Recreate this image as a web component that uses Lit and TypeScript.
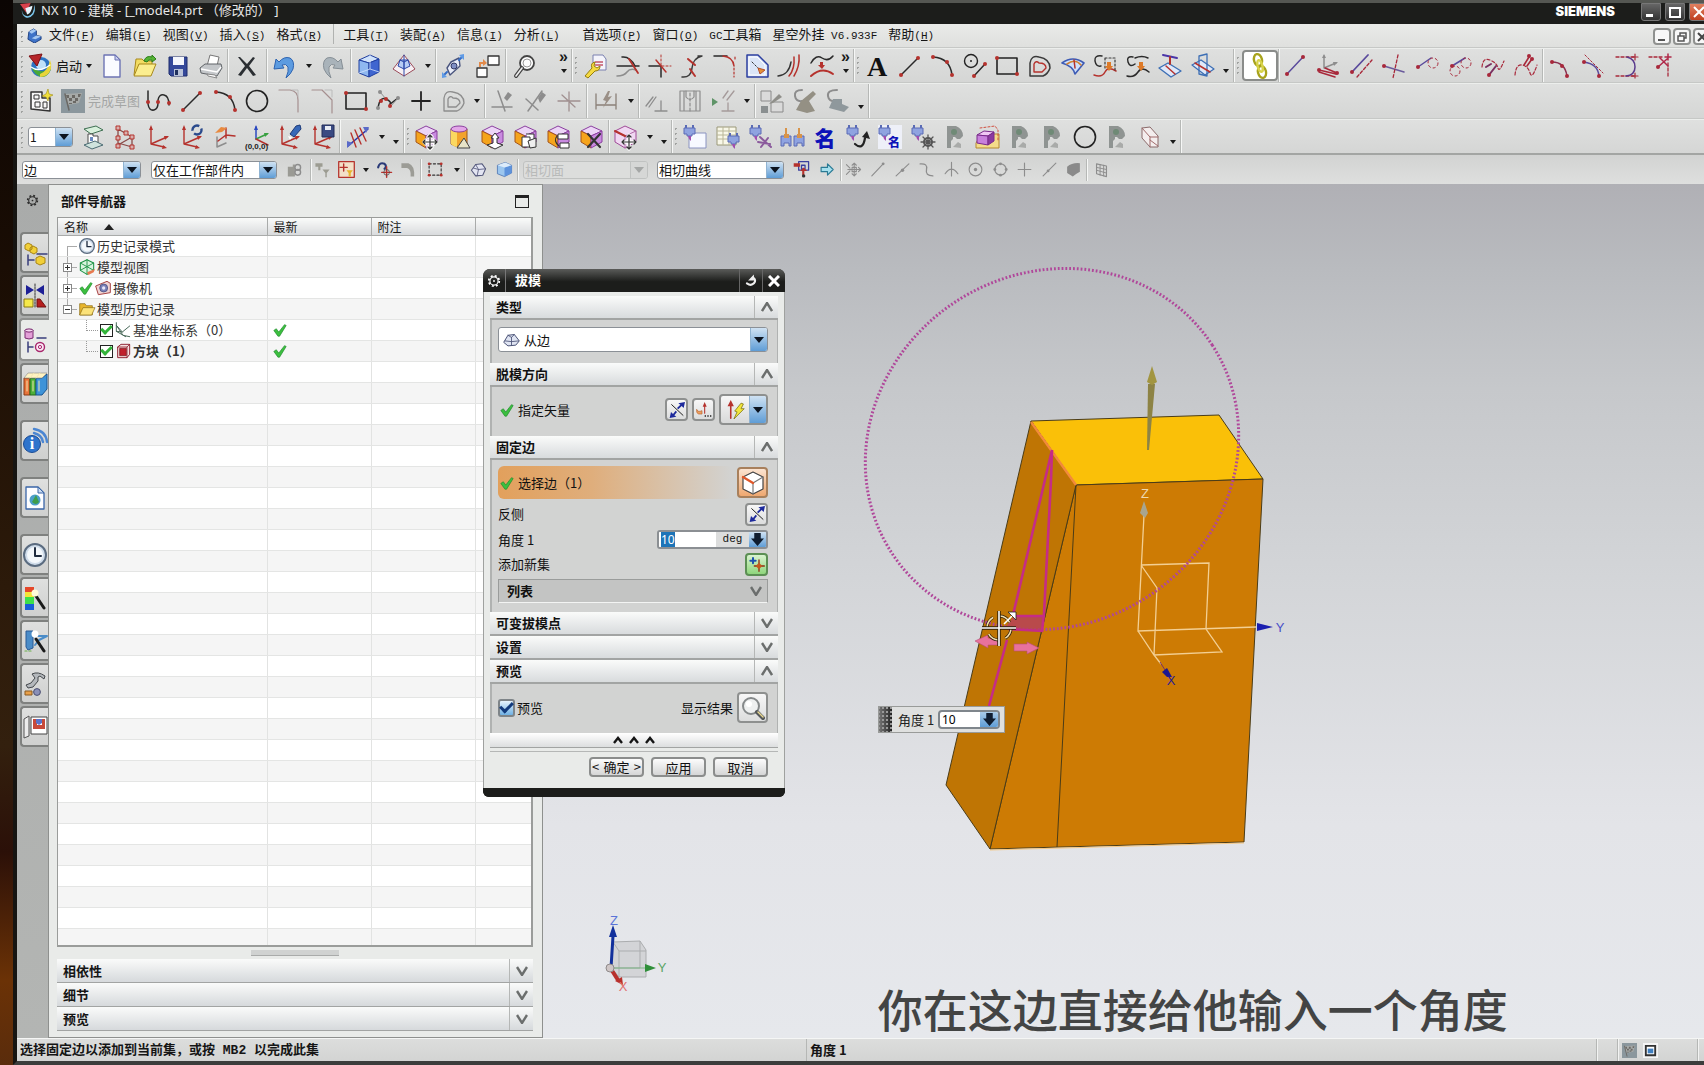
import { LitElement, html, svg, css, nothing } from "lit";

/* ---------- drawing helpers ---------- */
const L = (d: string, c = "#2a2a2a", w = 1.5, dash = "") =>
  svg`<path d=${d} fill="none" stroke=${c} stroke-width=${w} stroke-dasharray=${dash || "none"} stroke-linecap="round" stroke-linejoin="round"/>`;
const P = (d: string, f: string, s = "none", w = 1) =>
  svg`<path d=${d} fill=${f} stroke=${s} stroke-width=${w} stroke-linejoin="round"/>`;
const C = (x: number, y: number, r: number, f = "none", s = "none", w = 1) =>
  svg`<circle cx=${x} cy=${y} r=${r} fill=${f} stroke=${s} stroke-width=${w}/>`;
const RED = "#b5322d";
const G = "#8d8d8d";
const dots = (pts: number[][], c = RED) => pts.map(([x, y]) => C(x, y, 2, c));
const TICK = "M1 9 4 7 7 11 14 2 16 3 8 16 6 16Z";

const purpleCube = (extra: unknown) => svg`
  ${P("M11 1 22 6 11 11 1 6Z", "#ecd5f6", "#8b3fa0")}
  ${P("M1 6 11 11V23L1 17Z", "#f5a41c", "#a4541c")}
  ${P("M11 11 22 6V17L11 23Z", "#c98be0", "#8b3fa0")}${extra}`;
const plug = (x: number, y: number) => svg`<g transform="translate(${x} ${y})">
  ${P("M1 3H12V9H9V11H4V9H1Z", "#8fa3e0", "#5a6bb5")}${P("M3 0V3M10 0V3", "none", "#5a6bb5", 2)}
  ${P("M5 11H8V16L6 14Z", "#a04fb0")}</g>`;
const leaf = svg`${P("M4 1H13Q20 4 20 11L17 14H14L12 12H10V14L8 16V23H4Z", "#8f9492")}${C(11, 7, 3, "#6f8a76")}${P("M10 22 15 17 18 19V23Z", "#a9aba9")}`;
const axes = (c = RED) => svg`${L("M4 19V3M4 19 20 12M4 19 17 22", c, 1.4)}${P("M4 0 6 5H2ZM22 11 18 15 17 11ZM20 23 15 24 16 20Z", c)}`;

const ICONS: Record<string, unknown> = {
  logo: svg`${C(13, 13, 10, "#2c74c4")}${P("M3 12Q7 23 15 23 23 21 23 12 19 18 12 17 6 16 3 12Z", "#4aa83a")}${P("M12 20Q20 17 22 6 24 10 23 15 20 23 12 23Z", "#e8d43a")}${C(13, 11, 5, "#bfe1fa")}${P("M1 2 14 0 9 12Z", "#b5262a", "#7c1014")}${L("M3 13Q11 19 22 11", "#fff", 1.2)}`,
  newdoc: svg`${P("M4 1H15L20 6V23H4Z", "#fafbff", "#6d74b4", 1.4)}${P("M15 1V6H20Z", "#c9cef0", "#6d74b4")}`,
  open: svg`${P("M1 21 3 5H9L11 7H19V10", "#f2dc62", "#a8881c")}${P("M1 22 6 10H23L18 22Z", "#fbee8f", "#a8881c")}${P("M11 7Q13 1 19 3V1L23 5 19 8V6Q15 5 14 8Z", "#55b335", "#2d7f1c")}`,
  save: svg`${P("M3 3H21V22H5L3 20Z", "#34489a", "#1e2c6c")}${P("M7 3H18V11H7Z", "#f4f6fc")}${P("M8 15H17V22H8Z", "#b9c2d8")}${P("M9 16H12V21H9Z", "#20305e")}`,
  print: svg`${P("M8 12 11 1 20 3 18 12Z", "#fff", "#777")}${P("M1 14 6 10H22L23 14 18 22 2 19Z", "#c4c7ca", "#606468")}${P("M2 15 18 18 22 13", "none", "#fff", 1.3)}${P("M8 20 16 21 18 24 9 22Z", "#fff", "#888")}`,
  del: svg`${P("M3 3 5 3 12 10 18 3 20 4 14 12 21 21 18 22 12 14 6 22 3 21 10 12Z", "#2b2f33")}`,
  undo: svg`${P("M2 15 4 5 7 8Q12 2 18 4 23 7 21 15 19 20 14 24 17 17 16 13 14 9 10 11L12 14Z", "#5c9be0", "#2d63b0")}`,
  redo: svg`${P("M22 15 20 5 17 8Q12 2 6 4 1 7 3 15 5 20 10 24 7 17 8 13 10 9 14 11L12 14Z", "#a9b3ba", "#868f96")}`,
  cube: svg`${P("M2 6 13 1 22 5 12 9Z", "#cfe2fb", "#1f3ea0")}${P("M2 6 12 9V23L2 19Z", "#8fb8f0", "#1f3ea0")}${P("M12 9 22 5V18L12 23Z", "#3f66d0", "#1f3ea0")}${L("M13 1V15L2 19M13 15 22 18", "#d5e4fc", 0.8)}`,
  pyramid: svg`${P("M12 1 1 15 12 22 23 15Z", "#f6f0f4", "#9a4a58")}${P("M8 6 16 6 18 12 12 15 6 12Z", "#b7cdf4", "#2c48a8")}${L("M12 1V22M8 6 12 8 16 6M12 8V15", "#2c48a8", 1)}`,
  fit: svg`${P("M10 8 18 4 19 12 9 21 6 14Z", "#e9edf8", "#4a557e", 1.4)}${C(13, 12, 3, "#7f8fc4", "#333a66")}${L("M18 6 22 2M2 22 6 18", "#356ec8", 2)}${P("M23 0V6L18 1ZM1 24V18L6 23Z", "#5f9be6")}`,
  windows: svg`${P("M12 2H23V11H12ZM1 14H11V23H1Z", "#fdfdfd", "#333", 1.3)}${P("M3 13V8H7V5L11 9 7 12V10H5V13Z", "#e28a4a")}`,
  mag: svg`${C(14, 9, 7, "#fff", "#444", 1.8)}${C(14, 9, 4, "none", "#999", 1)}${L("M9 14 3 22", "#444", 4)}${L("M9 14 3 22", "#eee", 1.6)}`,
  wrench: svg`${P("M10 1H20L23 5V16H10Z", "#f4f4fb", "#7a80b0")}${P("M12 8H20M12 11H20", "none", "#c4566a", 1.4)}${P("M2 22 9 14Q7 9 12 8L11 12 14 14 17 12Q17 17 12 17L5 24Z", "#f5da40", "#957d10")}`,
  cv1: svg`${L("M1 22Q8 22 11 18T20 16", G)}${L("M1 12H23")}${L("M6 3Q14 2 19 12")}${L("M13 5 22 19", RED, 1.8)}`,
  cv2: svg`${L("M1 12H13M13 12V23")}${L("M13 1V12H23", RED, 1, "2 2")}${L("M8 6 18 18", RED)}`,
  cv3: svg`${L("M2 23Q11 24 12 14T22 2H18", "#3a3a3a")}${L("M8 5 15 11M10 15 15 22", RED, 2)}`,
  cv4: svg`${L("M1 2H14")}${L("M10 2Q20 3 21 12", RED)}${L("M21 14V23M22 5V1", RED, 1.2, "2 2")}`,
  cv5: svg`${P("M2 1H13L23 11V23H2Z", "#dbe5f7", "#2c3fa0", 1.5)}${P("M4 3H12L20 11V21H4Z", "none", "#fff")}${L("M7 8 14 15", "#333", 1, "2 2")}${P("M13 14 20 16 15 20Z", "#e49238", "#b5502d")}`,
  cv6: svg`${L("M1 22Q12 21 14 8", "#333")}${L("M12 22Q18 15 17 3M17 22Q23 12 22 1", RED, 1.5)}`,
  cv7: svg`${L("M1 9Q6 0 12 4T23 2")}${L("M1 22Q12 12 23 20", RED, 2)}${P("M10 8H13V11H15L12 15 8 11H10Z", RED)}`,
  text: svg`<text x="12" y="22" text-anchor="middle" font-family="Liberation Serif, serif" font-weight="bold" font-size="28" fill="#111">A</text>`,
  line: svg`${L("M3 21 20 4")}${dots([[3, 21], [20, 4]])}`,
  arc: svg`${L("M3 3Q20 4 22 21")}${dots([[3, 3], [17, 8], [22, 21]])}`,
  circ: svg`${C(12, 12, 10.5, "none", "#222", 1.6)}`,
  circline: svg`${C(8, 7, 6.5, "none", "#222", 1.4)}${C(8, 7, 1, "#222")}${L("M11 22 22 10")}${dots([[11, 22], [22, 10]])}`,
  rect: svg`${P("M2 4H22V20H2Z", "none", "#222", 1.6)}${dots([[2, 4], [22, 20]])}`,
  offset: svg`${P("M2 22V9Q3 1 11 3 22 5 22 14 20 20 15 22Z", "none", "#3a3a3a", 1.5)}${P("M6 18V10Q8 6 11 9 18 9 18 14L14 18Z", "none", RED, 1.4)}`,
  offsetg: svg`${P("M2 22V9Q3 1 11 3 22 5 22 14 20 20 15 22Z", "none", G, 1.3)}${P("M6 18V10Q8 6 11 9 18 9 18 14L14 18Z", "none", G, 1.3)}`,
  surf1: svg`${P("M1 9Q12 1 23 9L14 20Q12 12 1 9Z", "#cfe0fa", "#3d5bb5", 1.6)}${L("M6 10Q14 4 20 11", "#d08030", 1.6)}${L("M13 6 14 14", RED)}`,
  wrap1: svg`${L("M9 2Q1 1 2 7T8 12")}${L("M1 21Q9 24 12 18T23 17", RED)}${L("M12 4H22V18M12 4V16", "#3a3a3a", 1.2, "2 2")}${P("M14 8H18V12H20L16 17 12 12H14Z", "#dd7a28")}`,
  wrap2: svg`${L("M7 3Q0 2 2 8T9 10M9 4Q16 1 22 4")}${L("M1 22Q8 24 12 18T23 18")}${P("M13 8H17V12H19L15 17 11 12H13Z", "#dd7a28")}`,
  surf2: svg`${P("M1 14 10 9 23 17 13 23Z", "#dfe8f8", "#3d6fb5", 1.4)}${L("M5 1 19 4", "#4a35a8", 2)}${L("M12 3V10", RED, 2)}${L("M8 12 17 20", RED)}`,
  surf3: svg`${P("M1 11 10 6 23 15 14 21Z", "#dfe8f8", "#3d6fb5", 1.3)}${P("M8 2 16 0V22L8 20Z", "none", "#3d6fb5", 1.3)}${L("M4 9 19 18", RED)}`,
  chain: svg`<g fill="none" stroke-width="2.4"><ellipse cx="10" cy="6" rx="4" ry="6" transform="rotate(-14 10 6)" stroke="#a8a31c"/><ellipse cx="14" cy="18" rx="4" ry="6" transform="rotate(-14 14 18)" stroke="#a8a31c"/><ellipse cx="12" cy="12" rx="2.4" ry="6" transform="rotate(-14 12 12)" stroke="#d8d348"/></g>`,
  k1: svg`${L("M4 20 20 3", "#5a4a9c")}${dots([[4, 20], [20, 3]], "#a8283a")}`,
  k2: svg`${L("M8 14V2M8 14 20 9", G)}${P("M8 0 10 4H6ZM22 8 18 12 17 8Z", G)}${L("M3 16 20 20M9 14 21 19M3 18 19 23", "#a8283a")}${dots([[3, 16], [21, 19]], "#a8283a")}`,
  k3: svg`${L("M3 18 19 1", "#5a4a9c", 1.8)}${L("M8 23 23 6", "#a8283a", 1.3, "3 2")}${dots([[3, 18]], "#a8283a")}`,
  k4: svg`${L("M2 12 22 18", "#6a5a9c")}${L("M16 1 11 24", "#a8283a", 1.3, "3 2")}${dots([[2, 12]], "#a8283a")}`,
  k5: svg`${L("M3 13 16 4", "#5a4a9c")}<circle cx="18" cy="9" r="5" fill="none" stroke="#a8283a" stroke-dasharray="3 2"/>${dots([[3, 13]], "#a8283a")}`,
  k6: svg`${L("M4 12 17 4", "#5a4a9c")}<g fill="none" stroke="#a8283a" stroke-dasharray="3 2"><circle cx="18" cy="9" r="5"/><circle cx="7" cy="17" r="5"/></g>${dots([[4, 12]], "#a8283a")}`,
  k7: svg`${L("M1 13Q2 3 9 6T17 14 23 7", "#a8283a", 1.2, "3 2")}${L("M8 21 15 12M5 13 10 10", "#7a3060", 2)}${dots([[8, 21]], "#a8283a")}`,
  k8: svg`${L("M1 21Q2 10 8 11T16 19 23 11", "#a8283a", 1.2, "3 2")}${L("M10 11 15 3M13 12 18 5", "#a8283a", 1.6)}${dots([[18, 5], [15, 2]], "#a8283a")}`,
  k9: svg`${L("M4 8Q17 8 19 22", "#8a3050")}${dots([[4, 8], [14, 12], [19, 22]], "#a8283a")}`,
  k10: svg`${L("M3 8Q17 10 18 22", "#5a4a9c")}${L("M4 1 22 19", "#a8283a", 1, "2 2")}${dots([[3, 8], [18, 22]], "#a8283a")}`,
  k11: svg`${L("M1 3H20M1 22H20", "#a8283a", 1.3, "3 2")}${L("M12 3Q20 5 20 13T11 22", "#5a3a8c")}${L("M20 0V6M17 3H23M20 19V24M17 22H23", "#a8283a", 1.2)}`,
  k12: svg`${L("M1 3H16M20 9V24", "#a8283a", 1.3, "3 2")}${L("M12 4 20 12M10 13 19 5M20 0V6M17 3H23", "#b02848")}${dots([[10, 13]], "#a8283a")}`,
  sketch: svg`${P("M2 3H13V9H21V22L2 20Z", "#f7f7f7", "#333", 1.5)}${P("M5 6H10V10H5ZM6 13H11V18H6ZM14 13H18V19H14Z", "none", "#333")}${P("M19 0 20 5 24 6 20 8 19 12 17 8 13 7 17 5Z", "#f0de3a", "#a08d10", 0.6)}`,
  flag: svg`${P("M0 0H24V24H0Z", "#8b979d")}${P("M4 5 21 4 18 14 7 16Z", "#a7aaa8")}${P("M5 6H8V9H6ZM11 6H14V9H11ZM17 5H20L19 8H17ZM8 9H11V12H8ZM14 9H17V12H14ZM8 14H11V15H8ZM12 12H15V14H12Z", "#6b6965")}${L("M4 5 8 21", "#6b6965")}`,
  scurve: svg`${L("M1 2V15Q2 22 7 21 11 20 11 14V11Q12 5 17 6 22 7 22 16")}${dots([[1, 13], [11, 13], [22, 14]])}`,
  fillet: svg`${L("M1 1H12Q20 2 20 11V23", "#a58f8f", 1.2)}${L("M14 1H20V8", "#bbb", 1)}`,
  chamfer: svg`${L("M1 1H11L21 11V24", "#a58f8f", 1.2)}${L("M14 1H21V8", "#bbb", 1)}`,
  spline: svg`${L("M2 19Q4 7 10 10T14 15 22 9")}${L("M4 3 10 10M14 18 22 9", G, 1)}${dots([[5, 12], [10, 10], [14, 17]])}${dots([[4, 3], [22, 9], [2, 19]], G)}`,
  plus: svg`${L("M12 3V21M3 12H21", "#222", 1.8)}`,
  trim1: svg`${L("M2 18 22 18M8 2 15 22", G)}${P("M14 9 18 3 22 6 17 12Z", G)}`,
  trim2: svg`${L("M2 10 14 21M4 22 18 2", G)}${P("M14 9 18 3 22 6 16 14Z", G)}`,
  trim3: svg`${L("M1 12H23M12 3V22M5 6 18 18", "#a09090", 1.3)}`,
  dim: svg`${L("M2 5V20M22 5V20M3 16H21", "#8a8078", 1.3)}${P("M9 11 14 2 16 2 14 8 18 7 9 19 12 12Z", "#9a8f86")}`,
  perp: svg`${L("M2 17 9 8M5 18 12 8M11 22H23M17 12V22", G, 1.3)}`,
  clamp: svg`${P("M2 2H6V22H2ZM6 2H18V22H6ZM18 2H22V22H18Z", "none", G, 1.2)}${L("M8 2V8Q12 13 16 8V2", G, 1.2)}${L("M12 4V24", G, 1.2, "3 2")}`,
  tri: svg`${P("M1 9 7 13 1 17Z", "#5f9468")}${L("M12 9 17 2M16 11 23 2M11 22H23M17 14V22", "#a59a9a", 1.3)}`,
  dis1: svg`${P("M1 2H11V12H1Z", "#dadada", "#8a8a8a")}${P("M11 13H23V23H11Z", "#dadada", "#8a8a8a")}${P("M1 17H8V24H1Z", "#8a8f90")}${P("M9 15 19 5 22 8 13 14Z", "#8f8f8a")}`,
  dis2: svg`${L("M9 1Q1 1 2 7T9 12", G, 2)}${P("M8 12 20 2 23 5 16 12 22 22 14 24 3 21Z", "#949084")}`,
  dis3: svg`${L("M11 1Q1 1 2 7T9 12", G, 2)}${P("M7 10H16V15L23 18 18 23 3 19Z", "#8f989c")}`,
  layers: svg`${P("M3 4 15 1 22 5 10 9Z", "#d8f0dc", "#3f6f52")}${P("M7 9H12V11H17V19H7Z", "#fff", "#4a4a4a")}${P("M9 12H12V16H9Z", "#6a8ac0")}${P("M3 20 14 16 22 20 11 24Z", "#cfe3dd", "#4a6a72")}`,
  nodes: svg`${L("M4 4V20M4 4 18 12V22L4 18M4 20 18 12", "#8a4a48", 1.3)}${[[4, 3], [4, 13], [4, 21], [12, 8], [18, 12], [18, 22]].map(([x, y]) => P(`M${x - 2} ${y - 2}h4v4h-4Z`, "#d8b0ae", RED))}`,
  ax1: axes(),
  ax2: svg`${axes()}<circle cx="17" cy="5" r="4.5" fill="none" stroke="#2a4a8c" stroke-width="2.4" stroke-dasharray="10 3"/>`,
  ax3: svg`${L("M5 22V12M5 22 14 18", G)}${L("M14 3V13M14 10 23 11M14 10 6 16", RED)}${P("M3 8 9 2 15 3 10 7Z", "#e88a40")}`,
  ax4: svg`${L("M11 14V2", "#2b49c0")}${P("M11 0 13 5H9Z", "#2b49c0")}${L("M11 14 22 9", "#37a040")}${P("M24 8 20 12 19 8Z", "#37a040")}${L("M11 14 23 20", RED)}<text x="0" y="24" font-family="Liberation Sans, sans-serif" font-size="8" font-weight="bold" fill="#222">(0,0,0)</text>`,
  ax5: svg`${axes()}${P("M12 9 18 1 22 0 23 4 16 12Z", "#3768b8", "#1d3a78")}${P("M10 11 14 12 12 15Z", "#fff")}`,
  ax6: svg`${axes()}${P("M11 0H23V12H11Z", "#3a4a82", "#222d58")}${P("M14 1H20V5H14Z", "#e8ecf4")}`,
  dimblue: svg`${L("M2 21 22 4", "#2430a8", 1.5)}${L("M5 8 10 22M9 5 15 19M14 3 20 16", RED, 1.4)}${P("M1 16 7 18 1 23ZM17 2 23 2 20 8Z", "#5a6ac8")}`,
  pc1: purpleCube(svg`${L("M15 10V24M9 17H21M13 12 15 10 17 12M13 22 15 24 17 22M11 15 9 17 11 19M19 15 21 17 19 19", "#fff", 3.4)}${L("M15 10V24M8 17H22M13 12 15 10 17 12M13 22 15 24 17 22M10 15 8 17 10 19M20 15 22 17 20 19", "#333", 1.2)}`),
  pc2: svg`${P("M3 4V19Q11 24 19 19V4Z", "#f2a32c", "#9a541c")}${P("M3 4V19Q6 22 9 22V5Z", "#fbd860")}<ellipse cx="11" cy="4" rx="8" ry="3" fill="#e3a6e8" stroke="#8b3fa0"/>${P("M9 23 16 13 22 23Z", "#e8e4c8", "#444")}`,
  pc3: purpleCube(svg`${P("M14 8 18 13H16V18L22 20 14 24 6 20 12 18V13H10Z", "#fff", "#333")}`),
  pc4: purpleCube(svg`${P("M8 12H16V22H8ZM12 9H20V18H16", "#fff", "#333")}${P("M14 16 22 13V22L16 23Z", "#eee", "#333")}`),
  pc5: purpleCube(svg`${P("M11 9H21V14H11ZM13 18H22V23H13Z", "#fff", "#333")}${L("M10 11Q6 16 12 21", "#333", 1.2)}`),
  pc6: purpleCube(svg`${L("M8 9 20 22M20 9 8 22", "#333", 2.2)}`),
  pc7: svg`${P("M11 1 22 6V17L11 23 1 17V6Z", "#f0d8f2", "#a04a98")}${L("M1 6 11 11 22 6M11 11V23", "#b06aa8", 1)}${L("M1 6 11 11", RED, 2)}${L("M15 10V24M9 17H21", "#fff", 3.4)}${L("M15 10V24M8 17H22M13 12 15 10 17 12M13 22 15 24 17 22M10 15 8 17 10 19M20 15 22 17 20 19", "#333", 1.2)}`,
  pl1: svg`${P("M6 8H23V23H6Z", "#f7f9ff", "#8a93c0")}${plug(0, 0)}`,
  pl2: svg`${P("M1 2H20V20H1Z", "#f8f7e8", "#9a9878")}${P("M1 6H20M1 10H20M1 14H20M7 2V20M13 2V20", "none", "#b9b698")}${plug(11, 8)}`,
  pl3: svg`${plug(1, 0)}${L("M10 17 22 19M13 22 20 13M12 12 23 22", "#8a5a9c", 2)}`,
  pl4: svg`${P("M0 11H10V21H8V18H3V21H0ZM13 11H23V21H21V18H16V21H13Z", "#8fa3e0", "#5a6bb5")}${P("M4 3H6V9H8V13H3V9H4ZM17 3H19V9H21V13H16V9H17Z", "#d8944a")}`,
  ming: svg`<text x="12" y="21" text-anchor="middle" font-family="Noto Sans CJK SC, sans-serif" font-weight="900" font-size="21" fill="#0d12b8">名</text>`,
  pl5: svg`${plug(0, 0)}${L("M9 19Q17 26 19 13", "#222", 2.2)}${P("M21 6 24 14 16 12Z", "#222")}`,
  pl6: svg`${P("M0 0H24V24H0Z", "#eef0f8")}${plug(0, 0)}<text x="16" y="22" text-anchor="middle" font-family="Noto Sans CJK SC, sans-serif" font-weight="900" font-size="12" fill="#0d12b8">名</text>`,
  pl7: svg`${plug(0, 0)}${C(17, 17, 4, "none", "#555", 2)}${L("M17 10V24M10 17H24M12 12 22 22M22 12 12 22", "#555", 1.3)}`,
  leaf,
  gold: svg`${P("M1 18 6 9H24V23H1Z", "#f4dc8a", "#b58a30")}${P("M2 10 9 6 19 7 13 11Z", "#f0c8f4", "#7a2a8c")}${P("M2 10 13 11V20L2 18Z", "#c880dc", "#7a2a8c")}${P("M13 11 19 7V16L13 20Z", "#8a3aa0", "#7a2a8c")}${L("M5 3 20 1 23 5V16", "#d05040", 1, "2 2")}`,
  box3: svg`${P("M4 3 12 2 20 11 20 22H12L4 13Z", "#f4eeee", "#8a6a6a")}${L("M4 3 12 12H20M12 12V22M12 15 20 21", "#a06a6a", 1)}`,
  s1: svg`${P("M4 8H11V5H14V22H4Z", "#9a9a94")}${C(18, 9, 4, "none", G, 2)}${C(18, 16, 4, "none", G, 2)}`,
  s2: svg`${P("M2 3H12V8H9V13H6V8H2ZM12 12H22L18 17V23H16V17Z", "#9c9c92")}`,
  s3: svg`${P("M1 1H23V23H1Z", "#f3e0c8", RED, 1.8)}${L("M8 4V14M3 9H13", RED, 2)}${P("M12 13H21L18 17V22H15V17Z", "#e8b52c")}`,
  s4: svg`${L("M3 9Q5 1 12 4 16 7 12 11", "#2a3a78", 3)}${L("M15 8V23M8 16H22", RED, 2)}${C(15, 16, 4, "none", "#444")}`,
  s5: svg`${P("M2 3H12Q21 6 20 22H15Q16 12 10 10H2Z", "#9c9c96")}`,
  s6: svg`${L("M3 4H20V20H3Z", "#333", 1.6, "3 3")}${dots([[3, 4], [20, 20], [20, 4], [3, 20]])}`,
  s7: svg`${P("M2 13 8 5 17 4 22 11 18 20 8 21Z", "#e3e5f2", "#55597c", 1.5)}${L("M8 5 12 12 22 11M12 12 10 21M5 10 12 12", "#55597c", 1.2)}`,
  s8: svg`${P("M2 6 13 2 22 6V17L12 22 2 18Z", "#9cc6ee", "#3a64a8")}${P("M12 9 22 6V17L12 22Z", "#5d92dc")}${P("M2 6 13 2 22 6 12 9Z", "#dcebfa")}`,
  s9: svg`${P("M8 1H22V13H8ZM12 6H17V11H12Z", "none", "#3a3fa0", 1.8)}${P("M1 3H10V8H1ZM10 14H20L15 9ZM13 14H16V20H13Z", RED)}${C(15, 21, 2.4, "#333")}`,
  s10: svg`${P("M3 9H12V4L20 12 12 20V15H3Z", "#a5e0ee", "#2a7a94", 1.6)}`,
  m1: svg`${L("M13 3V21M4 12H22M13 3 10 6M13 3 16 6M13 21 10 18M13 21 16 18M22 12 19 9M22 12 19 15M2 5 7 10M2 19 7 14", G)}${P("M10 9H16V15H10Z", "none", G, 1.5)}`,
  m2: svg`${L("M4 21 20 4", G, 1.6)}${C(20, 4, 2, G)}`,
  m3: svg`${L("M3 21 21 4", G, 1.6)}${C(12, 13, 2.4, G)}`,
  m4: svg`${L("M3 4Q14 3 12 12T21 21", G, 1.8)}`,
  m5: svg`${L("M3 18Q12 5 21 18M12 2V21", G, 1.6)}`,
  m6: svg`${C(12, 12, 9, "none", G, 1.6)}${C(12, 12, 2.4, G)}`,
  m7: svg`${C(12, 12, 8, "none", G, 1.6)}${dots([[12, 4], [12, 20], [4, 12], [20, 12]], G)}`,
  m8: svg`${L("M12 3V21M3 12H21", G, 1.6)}`,
  m9: svg`${L("M3 21 21 3", G, 1.6)}${C(10, 14, 2, G)}`,
  m10: svg`${P("M3 8Q10 2 21 3V15Q15 18 11 22L3 17Z", "#8a8a8a")}`,
  m11: svg`${P("M5 4 19 7V22L5 18Z", "none", G, 1.6)}${L("M5 9 19 12M5 13 19 17M10 5V20M15 6V21", G, 1.3)}`,
  gear: svg`<circle cx="12" cy="12" r="7" fill="none" stroke="currentColor" stroke-width="2"/><circle cx="12" cy="12" r="9" fill="none" stroke="currentColor" stroke-width="3" stroke-dasharray="3.4 3.7"/>${C(12, 12, 1.6, "currentColor")}`,
  t1: svg`${P("M2 4 5 2 9 4V8L6 10 2 8ZM7 7 10 5 14 7V11L11 13 7 11ZM13 17 17 15 22 17V22L17 24 13 22Z", "#f1cf38", "#a88514")}${L("M5 14V24M5 19H11M14 13H24", "#3a3f7c")}`,
  t2: svg`${P("M3 1 11 6 3 11ZM21 1 13 6 21 11Z", "#1d1f96")}${L("M12 0V24", "#333", 1, "2 1")}${P("M1 15H10V23H1Z", "#f6e94a", "#8a7a10")}${P("M14 15H17L23 23H14Z", "#b51e1e", "#701010")}`,
  t3: svg`${P("M2 2V10Q6 12 10 10V2Z", "#e3a0d8", "#7a2a70")}<ellipse cx="6" cy="2.5" rx="4" ry="1.6" fill="#f7d8f2" stroke="#7a2a70"/>${L("M14 10H23M5 14V24M5 19H10", "#3a3f7c")}${C(17, 19, 4.5, "#fbe8f6", "#a8286c", 1.4)}${C(17, 19, 1.6, "none", "#a8286c")}`,
  t4: svg`${P("M1 6H7V23H1Z", "#e8743a", "#8a3a14")}${P("M7 6H13V23H7Z", "#4caf38", "#246a18")}${P("M13 6H19L24 2V17L19 23H13Z", "#3d93d8", "#1a5590")}${P("M1 6 5 1H24L19 6Z", "#fff3c0", "#888", 0.6)}${L("M7 6 11 1M13 6 17 1M4 9V19M10 9V19M16 9V19", "#f4e6b0", 1)}`,
  t5: svg`${C(9, 15, 8.5, "#2f74cc", "#1a4b94")}${L("M11 4Q19 6 20 13M11 0Q23 2 24 13", "#4b86d2", 2.4)}<text x="9" y="20" text-anchor="middle" font-family="Liberation Serif, serif" font-weight="bold" font-size="16" fill="#fff">i</text>`,
  t6: svg`${P("M3 1H15L21 7V23H3Z", "#fdfdff", "#3a66a8", 1.3)}${P("M15 1V7H21Z", "#cbdcf2", "#3a66a8")}${C(12, 14, 5.5, "#4a9ec8")}${P("M9 16 13 9 16 16Q13 20 9 16Z", "#3f9d4a")}`,
  clock: svg`${C(12, 12, 11, "#cfdcea", "#5b6c80", 2)}${C(12, 12, 8, "#f4f8fc")}${L("M12 5V13H18", "#1f2c40", 2)}`,
  t8: svg`${P("M2 1H11V7H2Z", "#e5482a")}${P("M2 6H11V11H2Z", "#f3e438")}${P("M2 11H11V18H2Z", "#3ee04a")}${P("M2 18H11V24H2Z", "#1a5ed8")}${L("M13 10 21 22", "#1a1a1a", 3)}${C(12, 7, 3.5, "#fffbd8")}`,
  t9: svg`${P("M3 2H10V19L5 21 3 18Z", "#4a8cc8", "#2a5a94")}${L("M12 7H24L16 11 12 16", "#4a8cc8", 2)}${L("M13 10 21 22", "#1a1a1a", 3)}${C(12, 5, 3.5, "#fff")}${L("M2 22H10", "#6ab04a", 1.2, "2 2")}`,
  t10: svg`${P("M9 2Q15-1 22 4L21 7 17 4 15 5V9L10 15 5 16 3 13 8 11 12 6Z", "#b4b8bc", "#44484c")}${P("M2 19H9V23H2Z", "#e8a04a", "#8a5a20")}${C(14, 20, 3.4, "#8a90b8", "#4a4e70")}`,
  t11: svg`${P("M1 4 6 1V21L1 23Z", "#ececec", "#555")}${P("M8 2H24V19H8Z", "#fff", "#444")}${P("M10 4H14V10H10ZM19 4H22V10H19ZM10 10H22V14H10Z", "#c84a3a")}${P("M13 4H19V8L16 10 13 8Z", "#5a72c8")}`,
  cubeView: svg`${P("M12 1 22 6V17L12 23 2 17V6Z", "#d9f4df", "#1f9447", 1.6)}${L("M12 1V23M2 6 22 17M22 6 2 17", "#1f9447", 1.4)}${P("M12 20 24 15 22 20 14 24Z", "#e87a50")}`,
  camera: svg`${P("M1 9 18 2 23 5V19L5 22Z", "#f0d4d4", "#a03838", 1.4)}${C(13, 12, 6, "#7a80b8", "#3a3f70")}${C(13, 12, 2.5, "#e8e8f8")}`,
  folder: svg`${P("M1 4H9L11 7H20V21H1Z", "#e8b52c", "#8a6a14")}${P("M1 21 6 10H24L19 21Z", "#fbe27a", "#8a6a14")}`,
  csys: svg`${L("M2 1V14L11 15 22 6M2 5 12 20 22 22M2 14 16 22M2 5 11 15", "#4a6a5a", 1.5)}`,
  block: svg`${P("M4 6 9 2H22V17L18 22H4Z", "#f6e0e0", "#8a1a2a", 1.4)}${P("M7 8H17V19H7Z", "#c0202c", "#701018")}${L("M4 6H18V22M18 6 22 2", "#8a1a2a", 1.2)}`,
  draft: svg`${P("M1 16 7 6 16 5 23 14 18 20 7 21Z", "#dfe4f2", "#4a5276", 1.4)}${L("M7 6 12 9 16 5M12 9V20M3 14 12 15 22 14", "#4a5276", 1.2)}`,
  flip: svg`${L("M4 4 21 20", "#222", 1.5)}${P("M24 0 22 9 19 6 14 11 12 9 17 4 14 2ZM1 24 3 15 6 18 10 13 12 15 8 20 11 22Z", "#1d2a9c")}`,
  vec: svg`${L("M13 17V4", RED, 1.6)}${P("M13 0 16 7H10Z", RED)}${P("M1 11Q3 16 9 13V18H4Q0 17 1 11Z", "#eda060", "#b5602d")}${P("M13 20H15V22H13ZM17 20H19V22H17ZM21 20H23V22H21Z", "#222")}`,
  bolt: svg`${L("M6 23V6", RED, 2)}${P("M6 0 10 8H2Z", RED)}${P("M11 14 19 4 22 5 19 11 23 11 10 24 14 15Z", "#f2e63c", "#7d7510")}`,
  edge: svg`${P("M12 1 22 6V18L12 23 2 18V6Z", "#fff", "#444", 1.2)}${L("M12 12V23M12 12 22 6", "#777", 1.2)}${L("M2 6 12 12", "#e0582a", 2.4)}`,
  addset: svg`${L("M6 3V11M2 7H10", "#1d53b0", 3)}${L("M15 6V23M8 15H23", "#8c2f14", 2)}${P("M15 10 20 15 15 20 10 15Z", "#c45a1c")}`,
  bigmag: svg`${C(10, 10, 8, "#eef0f0", "#85898a", 2)}${C(8, 8, 3, "#fff")}${L("M16 16 22 22", "#55585a", 4)}${L("M17 16 22 21", "#e8d890", 1.4)}`,
  reset: svg`${L("M15 6Q22 10 17 16 12 21 5 16", "#eee", 3.6)}${P("M17 1V11H7Z", "#eee")}`,
};

const icon = (n: string, cls = "") => svg`<svg class="ic ${cls}" viewBox="0 0 24 24" aria-hidden="true">${ICONS[n]}</svg>`;
const tick = html`<svg class="tick" viewBox="0 0 17 17" role="img" aria-label="最新"><path d=${TICK} fill="#3cbf3f" stroke="#1f8a2c" stroke-width=".8"/></svg>`;
const chev = (up: boolean) => html`<svg class="chev" viewBox="0 0 12 10" aria-hidden="true"><path d=${up ? "M1 9 6 1 11 9" : "M1 1 6 9 11 1"} fill="none" stroke="#6b6e6d" stroke-width="2.4"/></svg>`;
const logoSmall = html`<svg class="applogo" viewBox="0 0 18 18" aria-hidden="true"><path d="M0 1 12 0 7 11Z" fill="#d8414c"/><path d="M2 8Q3 15 9 15 16 13 16 2 18 8 15 13 11 18 6 16 2 14 2 8Z" fill="#7cc8ee"/><path d="M6 6 14 3Q13 11 8 13Z" fill="#e9f6ff"/></svg>`;

/* ---------- toolbar data: w is the width of a group, items share it ---------- */
interface Group { w: number; items: string[]; grip?: boolean; sep?: boolean }
const BAR1: Group[] = [
  { w: 132, items: ["newdoc", "open", "save", "print"] },
  { w: 39, sep: true, items: ["del"] },
  { w: 84, sep: true, items: ["undo", "|caret", "redo"] },
  { w: 85, sep: true, items: ["cube", "pyramid", "|caret"] },
  { w: 70, sep: true, items: ["fit", "windows"] },
  { w: 66, sep: true, items: ["mag", "|gap", "|over"] },
  { w: 282, sep: true, grip: true, items: ["wrench", "cv1", "cv2", "cv3", "cv4", "cv5", "cv6", "cv7", "|over"] },
  { w: 380, sep: true, grip: true, items: ["text", "line", "arc", "circline", "rect", "offset", "surf1", "wrap1", "wrap2", "surf2", "surf3", "|low"] },
  { w: 45, sep: true, grip: true, items: ["chain"] },
  { w: 264, sep: true, items: ["k1", "k2", "k3", "k4", "k5", "k6", "k7", "k8"] },
  { w: 135, sep: true, items: ["k9", "k10", "k11", "k12"] },
];
const BAR2: Group[] = [
  { w: 341, items: ["scurve", "line", "arc", "circ", "fillet", "chamfer", "rect", "spline", "plus", "offsetg", "|caret"] },
  { w: 102, sep: true, items: ["trim1", "trim2", "trim3"] },
  { w: 52, sep: true, items: ["dim", "|caret"] },
  { w: 116, sep: true, items: ["perp", "clamp", "tri", "|caret"] },
  { w: 114, sep: true, items: ["dis1", "dis2", "dis3", "|low"] },
  { w: 3, sep: true, items: [] },
];
const BAR3: Group[] = [
  { w: 262, items: ["layers", "nodes", "ax1", "ax2", "ax3", "ax4", "ax5", "ax6"] },
  { w: 64, sep: true, items: ["dimblue", "|caret", "|low"] },
  { w: 205, sep: true, grip: true, items: ["pc1", "pc2", "pc3", "pc4", "pc5", "pc6"] },
  { w: 63, sep: true, items: ["pc7", "|caret", "|low"] },
  { w: 509, sep: true, grip: true, items: ["pl1", "pl2", "pl3", "pl4", "ming", "pl5", "pl6", "pl7", "leaf", "gold", "leaf", "leaf", "circ", "leaf", "box3", "|low"] },
  { w: 3, sep: true, items: [] },
];
const SEL_A: Group[] = [
  { w: 33, items: ["s1"] },
  { w: 110, sep: true, items: ["s2", "s3", "|caret", "s4", "s5"] },
  { w: 44, sep: true, items: ["s6", "|caret"] },
  { w: 53, sep: true, items: ["s7", "s8"] },
  { w: 6, sep: true, items: [] },
];
const SEL_B: Group[] = [
  { w: 51, items: ["s9", "s10"] },
  { w: 246, sep: true, items: ["m1", "m2", "m3", "m4", "m5", "m6", "m7", "m8", "m9", "m10"] },
  { w: 30, sep: true, items: ["m11"] },
];

const MENUS: [string, string][] = [
  ["文件", "F"], ["编辑", "E"], ["视图", "V"], ["插入", "S"], ["格式", "R"], ["|", ""], ["工具", "T"], ["装配", "A"],
  ["信息", "I"], ["分析", "L"], ["||", ""], ["首选项", "P"], ["窗口", "O"],
];

const TABS: { n: string; gap?: boolean; on?: boolean }[] = [
  { n: "t1" }, { n: "t2" }, { n: "t3", on: true }, { n: "t4" }, { n: "t5", gap: true }, { n: "t6", gap: true },
  { n: "clock", gap: true }, { n: "t8" }, { n: "t9" }, { n: "t10" }, { n: "t11" },
];

class ToolGroups extends LitElement {
  static properties = { groups: { attribute: false }, small: { type: Boolean } };
  declare groups: Group[];
  declare small: boolean;
  constructor() { super(); this.groups = []; this.small = false; }
  static styles = css`
    :host { display: flex; align-items: stretch; flex: none; }
    .group { display: flex; align-items: stretch; box-sizing: border-box; flex: none; }
    .sep { border-left: 1px solid #b6b8b6; box-shadow: inset 1px 0 #f6f7f6; }
    .grip { width: 7px; margin: 6px 0; flex: none; background: radial-gradient(circle, #a0a2a0 1px, transparent 1px) 1px 0 / 5px 5px repeat-y; }
    button { border: 0; padding: 0; margin: 0; background: none; display: grid; place-items: center; font: 12px "Liberation Sans", sans-serif; color: #1a1a1a; }
    .tool { flex: 1; min-width: 0; }
    .tool.pressed { margin: 1px 0 1px 1px; background: #fff; border: 2px solid #8a8c8a; border-radius: 4px; }
    .ic { width: 24px; height: 24px; overflow: visible; }
    .small .ic { width: 17px; height: 17px; }
    .caret { width: 14px; }
    .caret::after { content: ""; border: 3px solid transparent; border-top: 4px solid #1a1a1a; border-bottom: 0; }
    .low { width: 14px; align-items: end; padding-bottom: 9px; }
    .low::after { content: ""; border: 3px solid transparent; border-top: 4px solid #1a1a1a; border-bottom: 0; }
    .over { width: 15px; align-content: space-between; padding: 2px 0 9px; font-weight: bold; font-size: 16px; line-height: 12px; }
    .over::after { content: ""; border: 3px solid transparent; border-top: 4px solid #1a1a1a; border-bottom: 0; }
    .gap { width: 12px; }
  `;
  item(n: string) {
    if (n === "|gap") return html`<span class="gap"></span>`;
    if (n === "|over") return html`<button class="over" aria-label="更多">»</button>`;
    if (n === "|caret") return html`<button class="caret" aria-label="下拉"></button>`;
    if (n === "|low") return html`<button class="low" aria-label="选项"></button>`;
    return html`<button class="tool ${n === "chain" ? "pressed" : ""}" aria-label=${n}>${icon(n)}</button>`;
  }
  render() {
    return this.groups.map(g => html`<div class="group ${g.sep ? "sep" : ""} ${this.small ? "small" : ""}" style="width:${g.w}px">
      ${g.grip ? html`<span class="grip"></span>` : nothing}${g.items.map(i => this.item(i))}</div>`);
  }
}
customElements.define("tool-groups", ToolGroups);

class ModelCanvas extends LitElement {
  static styles = css`
    :host { display: block; height: 100%; }
    svg { display: block; width: 100%; height: 100%; }
    text { font-family: "Liberation Sans", sans-serif; font-size: 13px; }
  `;
  render() {
    return html`<svg viewBox="543 184 1161 854" preserveAspectRatio="xMidYMid meet" role="img" aria-label="模型">
      <g stroke="#4a3c18" stroke-width="1" stroke-linejoin="round">
        <path d="M1031 421 1219 415 1263 479 1076 485Z" fill="#fac008"/>
        <path d="M1076 485 1263 479 1244 842 990 849Z" fill="#cd7b04"/>
        <path d="M1031 421 1076 485 990 849 946 785Z" fill="#bf7504"/>
        <path d="M1076 485 1057 847" fill="none"/>
      </g>
      <path d="M1031 422 1076 485" stroke="#f28a3c" stroke-width="2.4"/>
      <path d="M990 850 1244 843" stroke="#f4c887" stroke-width="1"/>
      <g fill="none" stroke="#f3cf93" stroke-width="1.3">
        <path d="M1144 515 1138 631 1256 627M1141 565 1209 563 1206 629 1222 652 1154 655 1138 631M1141 565 1157 588 1154 655 1161 664"/>
      </g>
      <path d="M1144 501 1148 513 1145 518 1140 513Z" fill="#a8a58f"/>
      <text x="1145" y="498" text-anchor="middle" fill="#eed9b0">Z</text>
      <path d="M1257 623 1273 627 1257 631Z" fill="#1b1fb0"/><text x="1280" y="632" text-anchor="middle" fill="#4a51c8">Y</text>
      <path d="M1160 662 1165 670" stroke="#7a3060"/><path d="M1162 672 1167 668 1172 677 1167 677Z" fill="#1b1790"/><text x="1171" y="685" text-anchor="middle" fill="#2a2090">X</text>
      <path d="M1147 450 1148 384 1155 384 1149 450Z" fill="#8d8345"/><path d="M1152 366 1157 382 1152 385 1147 382Z" fill="#a29540"/>
      <ellipse cx="1052" cy="449" rx="191" ry="176" transform="rotate(-33 1052 449)" fill="none" stroke="#b0479a" stroke-width="3" stroke-dasharray="1.8 2"/>
      <path d="M1014 616 1044 616 1042 631 1004 629Z" fill="#b8405e" opacity=".8"/>
      <g fill="none" stroke="#c52c86" stroke-width="2.6"><path d="M1052 450 1013 615M1007 640 989 706M1052 450 1051 480 1044 614 1042 631 1008 629M1014 616H1044"/></g>
      <g fill="#e8729c" stroke="#b84a78" stroke-width=".6"><path d="M975 641 988 635V638L998 640V645L988 645V648Z"/><path d="M1014 644H1027V642L1039 648 1027 654V651H1014Z"/></g>
      <g fill="none"><circle cx="999" cy="628" r="12" stroke="#2a1d08" stroke-width="3" stroke-dasharray="12 7"/><circle cx="999" cy="628" r="12" stroke="#f3dfae" stroke-width="1.6" stroke-dasharray="12 7"/>
        <path d="M982 628H1016M999 611V646" stroke="#2a1d08" stroke-width="3.4"/><path d="M982 628H1016M999 611V646M1004 624 1014 614" stroke="#fff" stroke-width="1.6"/></g>
      <path d="M1008 612H1016V620Z" fill="#fff" stroke="#222" stroke-width=".8"/>
      <g fill="#c6c8ca" fill-opacity=".6" stroke="#abadaf"><path d="M613 942 640 941 646 950V977L619 977 611 968Z"/><path d="M613 942 619 951H646M619 951V977M640 941V968H612" fill="none"/></g>
      <path d="M611 968 613 936" stroke="#12309c" stroke-width="3"/><path d="M613 925 617 937H609Z" fill="#12309c"/>
      <path d="M612 968H648" stroke="#7bb583" stroke-width="1"/><path d="M645 964 656 968 645 972Z" fill="#2f8f3a"/>
      <path d="M611 969 618 980" stroke="#b8302c" stroke-width="4"/><path d="M615 981 622 977 623 985Z" fill="#b8302c"/><circle cx="610" cy="968" r="4" fill="#cfc6c6" stroke="#8f8a8a"/>
      <text x="614" y="925" text-anchor="middle" fill="#5a74d8">Z</text><text x="662" y="972" text-anchor="middle" fill="#5aa566">Y</text><text x="623" y="991" text-anchor="middle" fill="#e07070">X</text>
    </svg>`;
  }
}
customElements.define("model-canvas", ModelCanvas);

const shared = css`
  .tick { width: 14px; height: 14px; flex: none; }
  .chev { width: 12px; height: 10px; }
  .ic { width: 24px; height: 24px; overflow: visible; flex: none; }
  button { font: inherit; color: inherit; padding: 0; margin: 0; box-sizing: border-box; }
  .combo { position: relative; display: flex; box-sizing: border-box; border: 1px solid #8b9096; border-radius: 3px; background: #fff; overflow: hidden; }
  .combo select { appearance: none; flex: 1; min-width: 0; border: 0; margin: 0; padding: 0 0 0 1px; background: none; font: inherit; color: inherit; outline: none; }
  .drop { flex: none; width: 16px; display: grid; place-items: center; background: linear-gradient(#cfe2f3, #5f9dd6); pointer-events: none; border-left: 1px solid #8fb3d2; }
  .drop::after { content: ""; border: 5px solid transparent; border-top: 6px solid #0c1420; border-bottom: 0; }
  .combo.off { color: #a9abaa; background: #dcdddc; border-color: #c0c2c1; }
  .combo.off .drop { background: #d6d7d6; border-color: #c0c2c1; }
  .combo.off .drop::after { border-top-color: #a5a7a6; }
`;

class DraftDialog extends LitElement {
  static styles = [shared, css`
    :host { display: block; width: 302px; font-size: 12px; line-height: 18px; color: #111; border-radius: 7px 7px 6px 6px; overflow: hidden; background: #1c1d1b; }
    .title { height: 23px; display: flex; align-items: center; color: #fff; background: linear-gradient(#5a5b59, #1c1d1b 55%); font-weight: bold; font-size: 13px; }
    .title h2 { font: inherit; line-height: 21px; margin: 0; flex: 1; align-self: flex-start; padding-left: 9px; }
    .title button { width: 23px; height: 23px; border: 0; background: none; display: grid; place-items: center; border-left: 1px solid #666; }
    .title button:first-child { border-left: 0; border-right: 1px solid #777; }
    .title .ic { width: 14px; height: 14px; }
    .body { background: #e9ebe9; padding: 4px 6px 11px; border: solid #9fa19f; border-width: 0 1px; box-sizing: border-box; }
    .head { width: 100%; height: 24px; border: 0; border-bottom: 2px solid #a2a4a3; background: linear-gradient(#fafbfa, #d8dbdd); display: flex; align-items: stretch; font-weight: bold; font-size: 13px; text-align: left; }
    .head span { flex: 1; padding-left: 6px; line-height: 22px; }
    .head i { width: 23px; display: grid; place-items: center; border-left: 1px solid #b5b7b6; }
    .panel { background: #d2d3d2; border: solid #b0b2b1; border-width: 0 1px 0 2px; padding: 7px 9px 11px 6px; }
    .row { display: flex; align-items: center; gap: 4px; }
    .row > .grow { flex: 1; }
    .type { height: 25px; font-size: 13px; }
    .type .ic { width: 17px; height: 17px; align-self: center; margin: 0 3px 0 4px; }
    .sq { width: 23px; height: 23px; border: 2px solid #8e908f; border-radius: 4px; background: linear-gradient(#f7f7f7, #dcdddd); display: grid; place-items: center; flex: none; }
    .sq .ic { width: 16px; height: 16px; }
    .vecs { height: 31px; padding-left: 2px; }
    .vecs .grow { font-size: 13px; }
    .split { display: flex; width: 49px; height: 31px; box-sizing: border-box; border: 2px solid #8e908f; border-radius: 4px; background: linear-gradient(#f7f7f7, #d8d9d9); overflow: hidden; }
    .split button { border: 0; background: none; flex: 1; display: grid; place-items: center; }
    .split .ic { width: 19px; height: 23px; }
    .split .drop { flex: none; width: 17px; background: linear-gradient(#cfe2f3, #5f9dd6); border-left: 1px solid #8fb3d2; }
    .big { width: 31px; height: 31px; }
    .big .ic { width: 24px; height: 24px; }
    .pick { height: 33px; }
    .fix { padding: 6px 9px 9px 6px; }
    .pick .grow { height: 33px; display: flex; align-items: center; gap: 4px; border-radius: 6px; padding-left: 2px; box-sizing: border-box; font-size: 13px; background: linear-gradient(90deg, #e2a05c, #dfae7c 40%, #d2d3d2); }
    .hot { background: linear-gradient(#fbe3d0, #efa870); border-color: #a8805c; }
    .flip { height: 30px; }
    .angle { height: 21px; }
    .addset { height: 28px; margin-bottom: 1px; }
    .flip, .angle, .addset { font-size: 13px; }
    .green { background: linear-gradient(#d9f3cf, #8fd67c); border-color: #5c8f54; }
    .num { display: flex; width: 111px; height: 19px; box-sizing: border-box; border: 2px solid #8b8f93; border-radius: 3px; background: #dcdddd; overflow: hidden; align-items: stretch; }
    .num input { width: 57px; box-sizing: border-box; border: 0; padding: 0 2px; font: 12px/15px "Noto Sans", sans-serif; outline: none; background: #fff; }
    .num input::selection { background: #1d74b8; color: #fff; }
    .num span { flex: 1; text-align: center; font: 11px/15px "Liberation Mono", monospace; }
    .num button, .split .drop { padding: 0; }
    .num button { width: 17px; border: 0; background: linear-gradient(#cfe2f3, #5f9dd6); display: grid; place-items: center; }
    .list { width: 100%; height: 24px; border: 1px solid #9a9c9b; border-bottom-color: #f3f4f3; background: #c3c4c3; display: flex; align-items: center; justify-content: space-between; padding: 0 5px 0 8px; font-weight: bold; font-size: 13px; }
    .prev { padding: 8px 9px 10px 6px; font-size: 13px; }
    .prev label { flex: 1; display: flex; align-items: center; gap: 2px; }
    .prev input { appearance: none; margin: 0; width: 17px; height: 18px; border: 2px solid #7e8488; border-radius: 3px; display: grid; place-items: center; background: linear-gradient(#e6f3fc, #6fb1e4); }
    .prev input:checked::after { content: ""; width: 10px; height: 5px; border: solid #123a7c; border-width: 0 0 3px 3px; transform: rotate(-45deg); margin-bottom: 4px; }
    .fold { width: 100%; height: 15px; border: 0; border-bottom: 1px solid #a2a4a3; background: linear-gradient(#fff, #dcdedf); display: grid; place-items: center; }
    .fold svg { width: 44px; height: 8px; }
    .rule { border-top: 1px solid #b5b7b6; margin: 3px 0 5px; }
    .acts { display: flex; gap: 7px; justify-content: flex-end; padding-right: 10px; }
    .acts button { width: 55px; height: 20px; border: 2px solid #8b8d8c; border-radius: 4px; background: linear-gradient(#fcfcfc, #d5d6d6); line-height: 15px; font-size: 13px; white-space: nowrap; }
    .acts .ok { display: flex; justify-content: space-between; padding: 0 1px; }
    .foot { height: 9px; background: #1c1d1b; }
  `];
  firstUpdated() {
    const f = this.renderRoot.querySelector<HTMLInputElement>("#ang");
    f?.focus({ preventScroll: true });
    f?.select();
  }
  head(t: string, up: boolean) {
    return html`<button class="head" aria-expanded=${up ? "true" : "false"}><span>${t}</span><i>${chev(up)}</i></button>`;
  }
  render() {
    const down = html`<svg width="13" height="13" viewBox="0 0 12 12" aria-hidden="true"><path d="M3 0H9V5H12L6 12 0 5H3Z" fill="#0f1d30"/></svg>`;
    return html`
      <div class="title"><button aria-label="设置">${icon("gear")}</button><h2>拔模</h2>
        <button aria-label="重置">${icon("reset")}</button>
        <button aria-label="关闭"><svg width="12" height="12" viewBox="0 0 12 12"><path d="M1 1 11 11M11 1 1 11" stroke="#fff" stroke-width="3"/></svg></button></div>
      <div class="body">
        ${this.head("类型", true)}
        <div class="panel"><div class="combo type">${icon("draft")}<select aria-label="类型"><option>从边</option></select><span class="drop"></span></div></div>
        ${this.head("脱模方向", true)}
        <div class="panel"><div class="row vecs">${tick}<span class="grow">指定矢量</span>
          <button class="sq" aria-label="反向">${icon("flip")}</button><button class="sq" aria-label="矢量构造器">${icon("vec")}</button>
          <span class="split"><button aria-label="自动判断">${icon("bolt")}</button><button class="drop" aria-label="矢量类型"></button></span></div></div>
        ${this.head("固定边", true)}
        <div class="panel fix">
          <div class="row pick"><span class="grow">${tick}选择边（1）</span><button class="sq big hot" aria-label="选择边">${icon("edge")}</button></div>
          <div class="row flip"><span class="grow">反侧</span><button class="sq" aria-label="反侧">${icon("flip")}</button></div>
          <div class="row angle"><label class="grow" for="ang">角度 1</label><span class="num"><input id="ang" .value=${"10"}><span>deg</span><button aria-label="角度选项">${down}</button></span></div>
          <div class="row addset"><span class="grow">添加新集</span><button class="sq green" aria-label="添加新集">${icon("addset")}</button></div>
          <button class="list">列表${chev(false)}</button>
        </div>
        ${this.head("可变拔模点", false)}${this.head("设置", false)}${this.head("预览", true)}
        <div class="panel prev"><div class="row"><label><input type="checkbox" .checked=${true}>预览</label><span>显示结果</span><button class="sq big" aria-label="显示结果">${icon("bigmag")}</button></div></div>
        <button class="fold" aria-label="折叠"><svg viewBox="0 0 44 8"><path d="M2 7 6 2 10 7M18 7 22 2 26 7M34 7 38 2 42 7" fill="none" stroke="#151515" stroke-width="2.4"/></svg></button>
        <div class="rule"></div>
        <div class="acts"><button class="ok"><span>&lt;</span><span>确定</span><span>&gt;</span></button><button>应用</button><button>取消</button></div>
      </div><div class="foot"></div>`;
  }
}
customElements.define("draft-dialog", DraftDialog);

class AppRoot extends LitElement {
  static styles = [shared, css`
    :host { display: block; position: relative; min-height: 100vh; overflow: hidden; color: #151515;
      font: 13px/18px "Noto Sans CJK SC", sans-serif; background: linear-gradient(#0b0503, #1a0d04 25%, #2c1a0a 55%, #33200e 70%, #2b1008 80%, #6b3206 92%, #5a2c0c); }
    .win { display: flex; flex-direction: column; height: 100vh; box-sizing: border-box; margin-left: 13px; border-left: 4px solid #161512; border-bottom: 4px solid #3c3d3c; }
    .title { flex: none; height: 24px; box-sizing: border-box; border-top: 3px solid #555753; background: #1c1d1b; color: #e8e8e8; display: flex; align-items: flex-start; margin-left: -4px; padding-left: 7px; overflow: hidden; }
    .applogo { width: 16px; height: 16px; margin-right: 5px; flex: none; }
    .title h1 { font: 13px/14px "Noto Sans", "Noto Sans CJK SC", sans-serif; margin: 0 auto 0 0; white-space: pre; }
    .brand { font: 900 13px/16px Inter, sans-serif; color: #fff; margin-right: 26px; }
    .wb { width: 20px; height: 18px; margin-right: 4px; border: 1px solid #777; border-radius: 0 0 3px 3px; background: linear-gradient(#666, #333); display: grid; place-items: center; flex: none; }
    .wb.x { background: linear-gradient(#e08060, #c04020); margin-right: -5px; }
    .menu { flex: none; height: 24px; display: flex; align-items: flex-start; background: linear-gradient(#e9eae8, #dfe0de); border-bottom: 1px solid #c6c8c6; box-sizing: border-box; overflow: hidden; }
    .menu a { color: inherit; text-decoration: none; margin-right: 11px; white-space: pre; flex: none; line-height: 20px; }
    .lat { font: 11px "Liberation Mono", monospace; }
    .menu .bar { width: 9px; height: 20px; border-left: 1px solid #b0b2b0; flex: none; }
    .menu .space { width: 12px; }
    .fill { flex: 1; }
    .part { width: 15px; height: 15px; margin: 4px 7px 0 2px; flex: none; }
    .mb { width: 18px; height: 17px; margin: 4px 2px 0 0; border: 2px solid #8f918f; border-radius: 4px; background: #f8f8f8; display: grid; place-items: center; flex: none; }
    .mb:last-child { margin-right: -7px; }
    .grip { width: 7px; align-self: stretch; margin: 5px 1px 5px 0; flex: none; background: radial-gradient(circle, #a0a2a0 1px, transparent 1px) 2px 0 / 5px 5px repeat-y; }
    .bar1, .bar2, .bar3 { flex: none; display: flex; box-sizing: border-box; overflow: hidden; border-bottom: 1px solid #c6c8c6; border-top: 1px solid #eceeec; background: linear-gradient(#dfe0df, #d5d6d5); }
    .bar1 { height: 35px; }
    .bar2, .bar3 { height: 36px; }
    .bar3 { border-bottom: 2px solid #a3a5a3; }
    .start { border: 0; background: none; width: 70px; display: flex; align-items: center; gap: 4px; white-space: nowrap; font-size: 13px; flex: none; padding-left: 3px; }
    .start::after { content: ""; border: 3px solid transparent; border-top: 4px solid #1a1a1a; border-bottom: 0; }
    .sk { border: 0; background: none; width: 32px; display: grid; place-items: center; flex: none; }
    .done { border: 0; background: none; width: 86px; display: flex; align-items: center; gap: 3px; color: #a4a6a5; padding-left: 4px; flex: none; font-size: 13px; white-space: nowrap; }
    .layer { width: 45px; height: 20px; align-self: center; margin: 0 4px 0 3px; font-size: 12px; }
    .selbar { flex: none; height: 29px; display: flex; align-items: center; background: linear-gradient(#d2d3d2, #dedfde); overflow: hidden; }
    .selbar .combo { height: 18px; flex: none; line-height: 16px; }
    .selbar tool-groups { height: 22px; }
    .w1 { width: 119px; margin: 0 10px 0 5px; }
    .w2 { width: 126px; }
    .w3 { width: 125px; margin-right: 9px; }
    .w4 { width: 127px; margin-right: 5px; }
    .main { flex: 1; min-height: 0; display: flex; }
    .rail { width: 32px; flex: none; background: linear-gradient(#a9abaa, #b3b5b3); display: flex; flex-direction: column; align-items: flex-end; border-right: 1px solid #8e908e; box-sizing: border-box; }
    .rail .set { border: 0; background: none; width: 32px; height: 48px; padding-bottom: 15px; display: grid; place-items: center; color: #2a2a2a; }
    .rail .set .ic { width: 13px; height: 13px; }
    .tab { width: 28px; height: 41px; margin-bottom: 2px; border: 2px solid #7f817f; border-right: 0; border-radius: 4px 0 0 4px; background: linear-gradient(#dfe0df, #cfd0cf); display: grid; place-items: center; flex: none; }
    .tab.gap { margin-top: 14px; }
    .tab.on { background: #e9ebe9; width: 30px; margin-right: -1px; height: 43px; border-color: #8f918f; }
    .nav { width: 494px; flex: none; background: #e9ebe9; border: 1px solid #8e908e; border-left: 0; box-sizing: border-box; padding: 0 9px 6px 8px; display: flex; flex-direction: column; }
    .navtop { height: 32px; flex: none; display: flex; align-items: center; justify-content: space-between; padding: 0 4px; font-weight: bold; }
    .navtop h2 { font: inherit; margin: 0; }
    .max { width: 14px; height: 13px; border: 1px solid #222; border-top: 3px solid #222; background: none; }
    .tree { flex: 1; min-height: 0; overflow: hidden; border: 2px solid #9a9c9a; border-width: 1px 2px 2px 1px; background: #fff; }
    table { border-collapse: collapse; table-layout: fixed; width: 100%; font-size: 12px; }
    th { height: 17px; padding: 0 0 0 6px; font-weight: normal; text-align: left; font-size: 12px; line-height: 16px; background: linear-gradient(#fafbfa, #d9dbdd); border-right: 1px solid #a9abaa; border-bottom: 1px solid #a9abaa; }
    .sorted { display: flex; align-items: center; gap: 16px; }
    .sorted::after { content: ""; border: 5px solid transparent; border-bottom: 6px solid #222; border-top: 0; }
    td { height: 20px; padding: 0; border-right: 1px solid #e2e3e2; border-bottom: 1px solid #e4e5e4; }
    th:last-child, td:last-child { border-right: 0; }
    tr:nth-child(even) td { background: #f5f5f5; }
    .cell { display: flex; align-items: center; height: 20px; gap: 2px; font-size: 13px; line-height: 20px; white-space: nowrap; color: #333; }
    .cell.bold { font-weight: bold; }
    .cell .ic { width: 16px; height: 16px; }
    .name { padding-left: 5px; }
    .twig { width: 14px; height: 20px; display: flex; align-items: center; background: linear-gradient(90deg, transparent 4px, #aaa 4px, #aaa 5px, transparent 5px), linear-gradient(transparent 10px, #aaa 10px, #aaa 11px, transparent 11px) 5px 0 no-repeat; }
    .twig.first { background-position: 0 10px, 5px 0; background-repeat: no-repeat; }
    .twig.last { background-size: 14px 10px, auto; background-repeat: no-repeat; }
    .twig button { width: 9px; height: 9px; border: 1px solid #888; background: #fff; display: grid; place-items: center; }
    .twig svg { width: 5px; height: 5px; }
    .kid { padding-left: 28px; }
    .kid::before { content: ""; width: 11px; height: 10px; align-self: flex-start; border: dotted #999; border-width: 0 0 1px 1px; flex: none; }
    .kid input { appearance: none; width: 13px; height: 13px; margin: 0; border: 1px solid #222; background: #fff; flex: none; display: grid; place-items: center; }
    .kid input:checked::after { content: ""; width: 8px; height: 4px; border: solid #33b43a; border-width: 0 0 3px 3px; transform: rotate(-45deg); margin-bottom: 3px; }
    .fresh { padding-left: 5px; }
    .splitter { flex: none; height: 12px; display: grid; place-items: center; }
    .splitter::after { content: ""; width: 88px; height: 5px; background: #d0d2d1; border: solid #a9abaa; border-width: 0 0 1px; }
    .sec { flex: none; height: 24px; border: 0; border-bottom: 1px solid #a2a4a3; background: linear-gradient(#fafbfa, #d6d9dc); display: flex; font-weight: bold; font-size: 13px; text-align: left; line-height: 23px; width: 100%; padding: 0 0 0 6px; align-items: stretch; }
    .sec span { flex: 1; }
    .sec i { width: 23px; display: grid; place-items: center; border-left: 1px solid #b5b7b6; }
    .view { flex: 1; min-width: 0; background: linear-gradient(#b0b0b5, #b9bbbf 10%, #c6c8cb 24%, #d3d5d8 46%, #e3e4e8 75%, #e6e8ec); }
    .status { flex: none; height: 23px; display: flex; align-items: center; box-sizing: border-box; border-top: 1px solid #f5f6f5; background: linear-gradient(#dcdddc, #d3d4d3); font-weight: bold; padding-left: 3px; }
    .status .msg { width: 786px; line-height: 20px; white-space: nowrap; }
    .status .msg span { font-family: "Liberation Mono", monospace; white-space: pre; }
    .status .what { flex: 1; border-left: 1px solid #b5b7b5; padding-left: 3px; line-height: 22px; }
    .status .cellbox { border-left: 1px solid #f2f3f2; box-shadow: -1px 0 #b5b7b5; height: 22px; display: flex; align-items: center; gap: 6px; padding: 0 3px; box-sizing: border-box; }
    .status .c1 { width: 21px; }
    .status .c2 { width: 80px; }
    .status .c3 { width: 6px; padding: 0; }
    .status .ic { width: 15px; height: 15px; }
    draft-dialog { position: absolute; left: 483px; top: 269px; }
    .angle { position: absolute; left: 878px; top: 706px; width: 127px; height: 27px; box-sizing: border-box; border: 1px solid #999b99; background: #dfe0df; display: flex; align-items: center; color: #222; }
    .angle .hold { width: 13px; align-self: stretch; margin-right: 6px; background: radial-gradient(circle, #999 1px, transparent 1px) 2px 3px / 4px 4px, linear-gradient(90deg, #777, #222); }
    .angle label { flex: 1; white-space: nowrap; }
    .angle .num { width: 62px; height: 19px; margin-right: 4px; box-sizing: border-box; border: 2px solid #7f868c; border-radius: 4px; background: #fff; display: flex; overflow: hidden; }
    .angle input { flex: 1; min-width: 0; border: 0; padding: 0 0 0 2px; font: 12px/15px "Noto Sans", sans-serif; outline: none; background: none; }
    .angle button { width: 18px; border: 0; background: linear-gradient(#a9cbe8, #5f9dd6); display: grid; place-items: center; }
    .caption { position: absolute; left: 70%; bottom: 23px; margin: 0; transform: translateX(-50%); font: 500 45px/66px "Noto Sans CJK SC", sans-serif; color: #434444; white-space: nowrap; }
  `];

  combo(cls: string, text: string, off = false) {
    return html`<span class="combo ${cls} ${off ? "off" : ""}"><select aria-label=${text} ?disabled=${off}><option>${text}</option></select><span class="drop"></span></span>`;
  }
  twig(s: string, end = "") {
    return html`<span class="twig ${end}">${s ? html`<button aria-label=${s === "+" ? "展开" : "收起"}><svg viewBox="0 0 5 5"><path d=${s === "+" ? "M0 2H2V0H3V2H5V3H3V5H2V3H0Z" : "M0 2H5V3H0Z"} fill="#333"/></svg></button>` : nothing}</span>`;
  }
  rows() {
    const data = [
      { n: html`<div class="cell name">${this.twig("", "first")}${icon("clock")}历史记录模式</div>` },
      { n: html`<div class="cell name">${this.twig("+")}${icon("cubeView")}模型视图</div>` },
      { n: html`<div class="cell name">${this.twig("+")}${tick}${icon("camera")}摄像机</div>` },
      { n: html`<div class="cell name">${this.twig("-", "last")}${icon("folder")}模型历史记录</div>` },
      { n: html`<div class="cell kid"><input type="checkbox" aria-label="基准坐标系" .checked=${true}>${icon("csys")}基准坐标系（0）</div>`, ok: true },
      { n: html`<div class="cell kid bold"><input type="checkbox" aria-label="方块" .checked=${true}>${icon("block")}方块（1）</div>`, ok: true },
    ];
    const blank = Array.from({ length: 28 }, () => ({ n: nothing, ok: false }));
    return [...data, ...blank].map(r => html`<tr><td>${r.n}</td><td>${r.ok ? html`<div class="cell fresh">${tick}</div>` : nothing}</td><td></td><td></td></tr>`);
  }
  render() {
    return html`
    <div class="win">
      <header class="title">${logoSmall}<h1>NX 10 - 建模 - [_model4.prt （修改的） ]</h1><span class="brand">SIEMENS</span>
        <button class="wb" aria-label="最小化"><svg width="12" height="12"><path d="M1 8H8V11H1Z" fill="#fff"/></svg></button>
        <button class="wb" aria-label="最大化"><svg width="12" height="12"><path d="M1 2H11V11H1Z" fill="none" stroke="#fff" stroke-width="2"/></svg></button>
        <button class="wb x" aria-label="关闭"><svg width="12" height="12"><path d="M1 1 11 11M11 1 1 11" stroke="#fff" stroke-width="2"/></svg></button></header>
      <nav class="menu" aria-label="菜单"><span class="grip"></span>
        <svg class="part" viewBox="0 0 16 16" aria-hidden="true"><path d="M2 4 7 1 10 3V8L15 9V12L8 16 1 12Z" fill="#3e73c8" stroke="#1d3f80"/><path d="M2 4 7 1 10 3 5 6ZM5 11 10 8 15 9 9 12Z" fill="#a5c8f2"/></svg>
        ${MENUS.map(([t, k]) => t === "|" ? html`<span class="bar"></span>` : t === "||" ? html`<span class="space"></span>`
          : html`<a href="#">${t}<span class="lat">(<u>${k}</u>)</span></a>`)}
        <a href="#"><span class="lat">GC</span>工具箱</a><a href="#">星空外挂<span class="lat"> V6.933F</span></a><a href="#">帮助<span class="lat">(<u>H</u>)</span></a>
        <span class="fill"></span>
        <button class="mb" aria-label="最小化"><svg width="10" height="10"><path d="M1 7H8V9H1Z" fill="#555"/></svg></button>
        <button class="mb" aria-label="还原"><svg width="10" height="10"><path d="M1 4H7V9H1ZM3 4V1H9V6H7" fill="none" stroke="#555" stroke-width="1.5"/></svg></button>
        <button class="mb" aria-label="关闭"><svg width="10" height="10"><path d="M1 1 9 9M9 1 1 9" stroke="#444" stroke-width="2"/></svg></button>
      </nav>
      <div class="bar1"><span class="grip"></span><button class="start">${icon("logo")}启动</button><tool-groups .groups=${BAR1}></tool-groups></div>
      <div class="bar2"><span class="grip"></span><button class="sk" aria-label="草图">${icon("sketch")}</button><button class="done">${icon("flag")}完成草图</button><tool-groups .groups=${BAR2}></tool-groups></div>
      <div class="bar3"><span class="grip"></span>${this.combo("layer", "1")}<tool-groups .groups=${BAR3}></tool-groups></div>
      <div class="selbar">${this.combo("w1", "边")}${this.combo("w2", "仅在工作部件内")}<tool-groups small .groups=${SEL_A}></tool-groups>
        ${this.combo("w3", "相切面", true)}${this.combo("w4", "相切曲线")}<tool-groups small .groups=${SEL_B}></tool-groups></div>
      <div class="main">
        <aside class="rail"><button class="set" aria-label="选项">${icon("gear")}</button>
          ${TABS.map(t => html`<button class="tab ${t.gap ? "gap" : ""} ${t.on ? "on" : ""}" aria-label=${t.n}>${icon(t.n)}</button>`)}</aside>
        <section class="nav">
          <div class="navtop"><h2>部件导航器</h2><button class="max" aria-label="最大化"></button></div>
          <div class="tree"><table>
            <colgroup><col width="209"><col width="104"><col width="104"><col></colgroup>
            <thead><tr><th><span class="sorted">名称</span></th><th>最新</th><th>附注</th><th></th></tr></thead>
            <tbody>${this.rows()}</tbody></table></div>
          <div class="splitter"></div>
          ${["相依性", "细节", "预览"].map(t => html`<button class="sec"><span>${t}</span><i>${chev(false)}</i></button>`)}
        </section>
        <main class="view"><model-canvas></model-canvas></main>
      </div>
      <footer class="status"><span class="msg">选择固定边以添加到当前集，或按<span> MB2 </span>以完成此集</span><span class="what">角度 1</span>
        <span class="cellbox c1"></span><span class="cellbox c2">${icon("flag")}<svg class="ic" viewBox="0 0 16 16" aria-hidden="true"><path d="M0 0H16V16H0Z" fill="#f5f5f5"/><path d="M3 3H13V13H3Z" fill="#fff" stroke="#333" stroke-width="2"/><path d="M5 6H11V11H5Z" fill="#3f7fc0"/></svg></span><span class="cellbox c3"></span></footer>
    </div>
    <div class="angle"><span class="hold"></span><label for="fa">角度 1</label><span class="num"><input id="fa" .value=${"10"}><button aria-label="角度选项"><svg width="13" height="13" viewBox="0 0 12 12"><path d="M3 0H9V5H12L6 12 0 5H3Z" fill="#0f1d30"/></svg></button></span></div>
    <draft-dialog></draft-dialog>
    <p class="caption">你在这边直接给他输入一个角度</p>`;
  }
}
customElements.define("app-root", AppRoot);
